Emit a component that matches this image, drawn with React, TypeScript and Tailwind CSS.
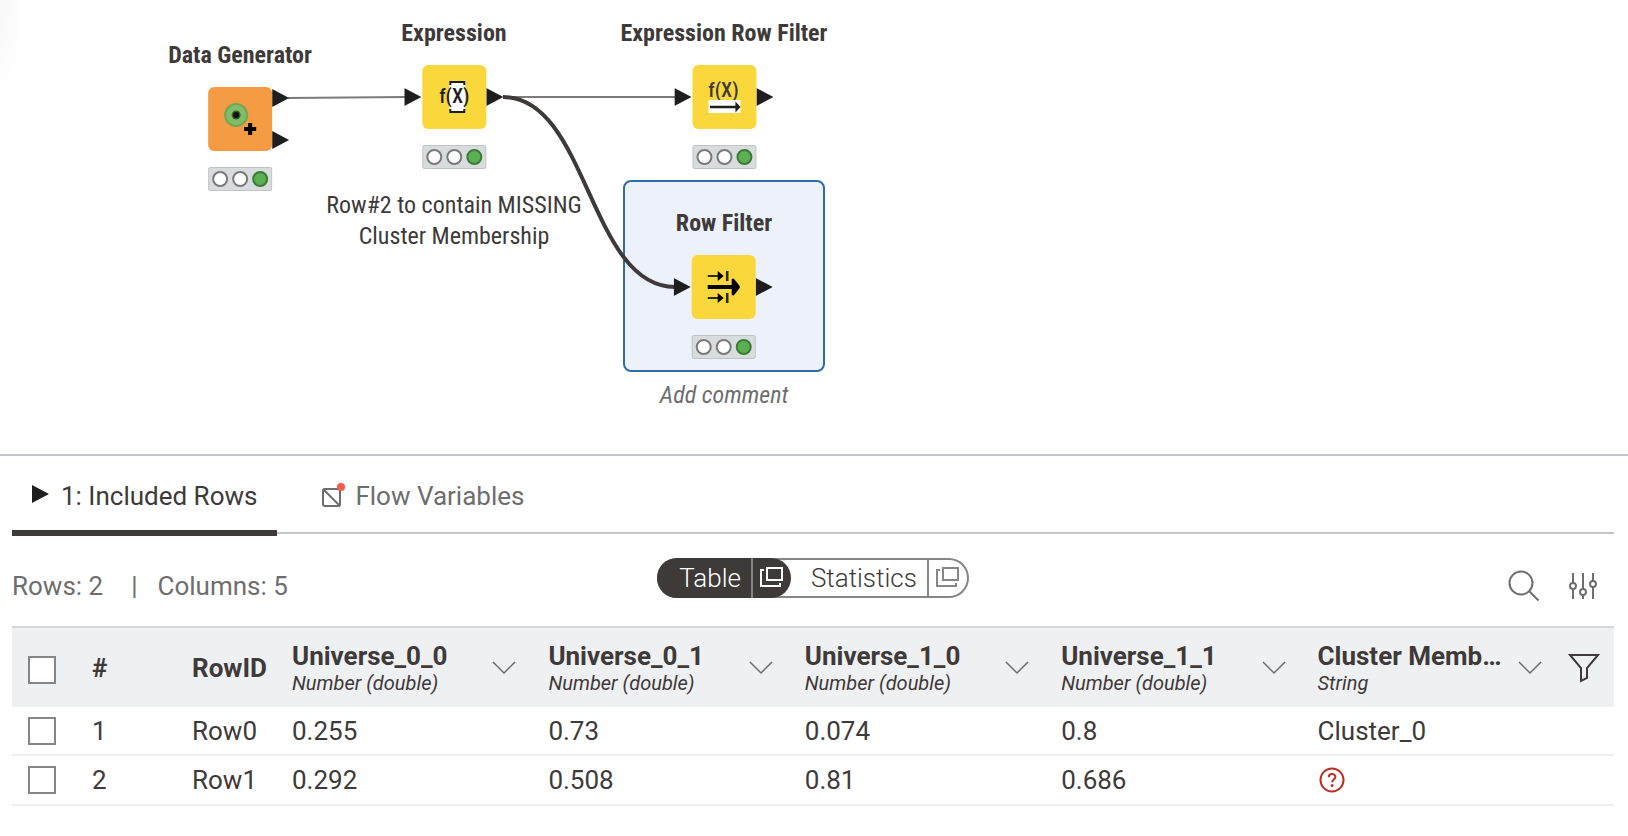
import React, { useState } from "react";

interface WorkflowNode {
  id: string;
  title: string;
  className: string;
  color: string;
  icon: React.ReactNode;
  hasInput?: boolean;
  outputs: number;
  comment?: React.ReactNode;
}

interface Column {
  name: string;
  type: string;
}

interface Row {
  id: string;
  values: (string | null)[];
}

const columns: Column[] = [
  { name: "Universe_0_0", type: "Number (double)" },
  { name: "Universe_0_1", type: "Number (double)" },
  { name: "Universe_1_0", type: "Number (double)" },
  { name: "Universe_1_1", type: "Number (double)" },
  { name: "Cluster Memb…", type: "String" },
];

const rows: Row[] = [
  { id: "Row0", values: ["0.255", "0.73", "0.074", "0.8", "Cluster_0"] },
  { id: "Row1", values: ["0.292", "0.508", "0.81", "0.686", null] },
];

const GeneratorIcon = () => (
  <svg viewBox="0 0 64 64" className="size-16" aria-hidden="true">
    <circle cx="28" cy="28" r="11" fill="#7fbd68" stroke="#74a552" strokeWidth="2" />
    <circle cx="28" cy="28" r="4.5" fill="#3d5c33" />
    <circle cx="28" cy="28" r="3" fill="#111" />
    <path d="M40 36h4v4h4v4h-4v4h-4v-4h-4v-4h4z" fill="#000" />
  </svg>
);

const ExpressionIcon = () => (
  <svg viewBox="0 0 64 64" className="size-16" aria-hidden="true">
    <rect x="27" y="16" width="16" height="32" fill="#fff" />
    <path d="M28 20v-3h14v3M28 44v3h14v-3" fill="none" stroke="#1e1e1e" strokeWidth="2" />
    <text x="32" y="38" textAnchor="middle" fontSize="20" fontWeight="500" fill="#1e1e1e">
      f(X)
    </text>
  </svg>
);

const ExpressionRowFilterIcon = () => (
  <svg viewBox="0 0 64 64" className="size-16" aria-hidden="true">
    <text x="31" y="32" textAnchor="middle" fontSize="20" fontWeight="500" fill="#3e3a39">
      f(X)
    </text>
    <rect x="16" y="35" width="32" height="13" fill="#fff" />
    <path d="M17.500 42H44" stroke="#1e1e1e" strokeWidth="2.500" />
    <path d="M43 36.500L48 42l-5 5.500z" fill="#1e1e1e" />
  </svg>
);

const RowFilterIcon = () => (
  <svg viewBox="0 0 64 64" className="size-16" aria-hidden="true">
    <path d="M16 21h11M16 43h11" stroke="#2e2a10" strokeWidth="2.200" />
    <path d="M26 16l6 5-6 5zM26 38l6 5-6 5z" fill="#000" />
    <path d="M35.500 16v10M35.500 38v10" stroke="#2e2a10" strokeWidth="2.600" />
    <path d="M16 32h26" stroke="#000" strokeWidth="4" />
    <path d="M40 24l2-.5 6 7.500v2l-6 7.500-2-.5z" fill="#000" />
  </svg>
);

const Port = () => (
  <svg viewBox="0 0 17 18" className="h-[18px] w-[17px]" aria-hidden="true">
    <path d="M0 0l17 9-17 9z" fill="#1e1e1e" />
  </svg>
);

const nodes: WorkflowNode[] = [
  {
    id: "generator",
    title: "Data Generator",
    className: "left-[240px] top-[39px]",
    color: "bg-[#f49b43]",
    icon: <GeneratorIcon />,
    outputs: 2,
  },
  {
    id: "expression",
    title: "Expression",
    className: "left-[454px] top-[17px]",
    color: "bg-[#fad73b]",
    icon: <ExpressionIcon />,
    hasInput: true,
    outputs: 1,
    comment: (
      <p className="mt-[21px] text-center text-2xl leading-[31px] whitespace-nowrap">
        Row#2 to contain MISSING
        <br />
        Cluster Membership
      </p>
    ),
  },
  {
    id: "expression-row-filter",
    title: "Expression Row Filter",
    className: "left-[724px] top-[17px]",
    color: "bg-[#fad73b]",
    icon: <ExpressionRowFilterIcon />,
    hasInput: true,
    outputs: 1,
  },
  {
    id: "row-filter",
    title: "Row Filter",
    className: "left-[724px] top-[207px]",
    color: "bg-[#fad73b]",
    icon: <RowFilterIcon />,
    hasInput: true,
    outputs: 1,
    comment: (
      <p className="mt-[21px] text-center text-2xl leading-[31px] text-[#6e6e6e] italic whitespace-nowrap">
        Add comment
      </p>
    ),
  },
];

const NodeStatus = () => (
  <div className="mt-4 flex h-6 w-16 items-center justify-center gap-1 rounded-xs border border-[#c0c4c6] bg-[#d8dcdd]">
    <span className="size-4 rounded-full border-2 border-[#7a7a7a] bg-white" />
    <span className="size-4 rounded-full border-2 border-[#7a7a7a] bg-white" />
    <span className="size-4 rounded-full border-2 border-[#3d7a38] bg-[#5cb053]" />
  </div>
);

const NodeView = ({ node }: { node: WorkflowNode }) => (
  <div className={`absolute flex -translate-x-1/2 flex-col items-center ${node.className}`}>
    <h2 className="h-12 text-2xl leading-[32px] font-bold whitespace-nowrap">{node.title}</h2>
    <div className={`relative size-16 rounded-md ${node.color}`}>
      {node.icon}
      {node.hasInput && (
        <div className="absolute top-[23px] right-full mr-px">
          <Port />
        </div>
      )}
      <div
        className={`absolute left-full flex flex-col gap-6 ${
          node.outputs > 1 ? "top-[2px]" : "top-[23px]"
        }`}
      >
        {Array.from({ length: node.outputs }, (_, i) => (
          <Port key={i} />
        ))}
      </div>
    </div>
    <NodeStatus />
    {node.comment}
  </div>
);

const WorkflowCanvas = () => (
  <section
    aria-label="Workflow"
    className="relative h-[454px] overflow-hidden font-['Roboto_Condensed',Roboto,sans-serif]"
  >
    <div className="absolute top-0 left-0 h-24 w-6 bg-radial-[farthest-side_at_0%_0%] from-[#f7f7f7] to-white" />
    {/* selection frame of the active node */}
    <div className="absolute top-[180px] left-[623px] h-[192px] w-[202px] rounded-lg border-2 border-[#306ca8] bg-[#ecf1fa]" />
    <svg className="absolute top-0 left-0 h-full w-[900px]" fill="none" aria-hidden="true">
      <path d="M288 98L405 97M503 97H675" stroke="#7b7b7b" strokeWidth="2" />
      <path d="M503 97C588 97 589 287 675 287" stroke="#3e3a39" strokeWidth="4" />
    </svg>
    {nodes.map((node) => (
      <NodeView key={node.id} node={node} />
    ))}
  </section>
);

const PopOutIcon = () => (
  <svg viewBox="0 0 24 22" className="h-[22px] w-6" fill="none" stroke="currentColor" strokeWidth="2">
    <path d="M8 1h15v12H8z" />
    <path d="M5 3H2v16h19v-3" />
  </svg>
);

const Chevron = () => (
  <svg viewBox="0 0 24 14" className="h-[14px] w-6" fill="none" stroke="#6e6e6e" strokeWidth="1.500">
    <path d="M1 1l11 11L23 1" />
  </svg>
);

const SearchIcon = () => (
  <svg viewBox="0 0 32 32" className="size-8" fill="none" stroke="#6e6e6e" strokeWidth="2">
    <circle cx="13" cy="13" r="11.500" />
    <path d="M21 21l9.500 9.500" />
  </svg>
);

const SlidersIcon = () => (
  <svg viewBox="0 0 30 28" className="h-7 w-[30px]" fill="none" stroke="#6e6e6e" strokeWidth="2">
    <path d="M5 1v10M5 17v10M15 1v16M15 23v4M25 1v8M25 15v12" />
    <circle cx="5" cy="14" r="3" />
    <circle cx="15" cy="20" r="3" />
    <circle cx="25" cy="12" r="3" />
  </svg>
);

const FilterIcon = () => (
  <svg viewBox="0 0 32 30" className="h-[30px] w-8" fill="none" stroke="#3e3a39" strokeWidth="2">
    <path d="M2 2h28L19 15v10l-6 3V15z" />
  </svg>
);

const FlowVariablesIcon = () => (
  <svg viewBox="0 0 24 26" className="h-[26px] w-6" fill="none" stroke="#6e6e6e" strokeWidth="2">
    <rect x="2" y="6" width="17" height="17" rx="2" />
    <path d="M2 6l17 17" />
    <circle cx="20" cy="4" r="4" fill="#f55b4e" stroke="none" />
  </svg>
);

const MissingIcon = () => (
  <svg viewBox="-1 -1 28 28" className="size-7" fill="none" stroke="#bd2d25" role="img" aria-label="Missing value">
    <circle cx="13" cy="13" r="11.500" strokeWidth="2" />
    <path d="M9.800 10.200c0-4.200 6.600-4.200 6.600-.2 0 2.600-3.300 2.400-3.300 5.200" strokeWidth="2" />
    <circle cx="13.100" cy="18.500" r="1.500" fill="#bd2d25" stroke="none" />
  </svg>
);

const Checkbox = ({
  label,
  checked,
  onChange,
}: {
  label: string;
  checked: boolean;
  onChange: () => void;
}) => (
  <input
    type="checkbox"
    aria-label={label}
    checked={checked}
    onChange={onChange}
    className="block size-7 appearance-none border-2 border-[#868686] bg-white checked:bg-[#3e3a39]"
  />
);

const OutputTable = () => {
  const [selected, setSelected] = useState<string[]>([]);
  const allSelected = selected.length === rows.length;

  const toggleRow = (id: string) => {
    setSelected((prev) => (prev.includes(id) ? prev.filter((r) => r !== id) : [...prev, id]));
  };

  return (
    <table className="w-full table-fixed text-left">
      <colgroup>
        <col className="w-[60px]" />
        <col className="w-[100px]" />
        <col className="w-[100px]" />
        {columns.map((column) => (
          <col key={column.name} />
        ))}
        <col className="w-[60px]" />
      </colgroup>
      <thead>
        <tr className="h-20 border-t-2 border-[#d5d8db] bg-[#eff0f2]">
          <th className="pt-1 pl-4">
            <Checkbox
              label="Select all rows"
              checked={allSelected}
              onChange={() => setSelected(allSelected ? [] : rows.map((r) => r.id))}
            />
          </th>
          <th className="pl-5 font-bold">#</th>
          <th className="pl-5 font-bold">RowID</th>
          {columns.map((column) => (
            <th key={column.name} className="pr-3 pl-5">
              <div className="flex items-center gap-4">
                <div className="min-w-0 flex-1">
                  <div className="truncate leading-[30px] font-bold">{column.name}</div>
                  <div className="text-[20px] leading-6 font-normal italic">{column.type}</div>
                </div>
                <button type="button" aria-label={`${column.name} options`}>
                  <Chevron />
                </button>
              </div>
            </th>
          ))}
          <th className="pl-[14px]">
            <button type="button" aria-label="Filter columns" className="block">
              <FilterIcon />
            </button>
          </th>
        </tr>
      </thead>
      <tbody>
        {rows.map((row, i) => (
          <tr key={row.id} className="h-12 border-b-2 border-[#efefef] last:h-[50px]">
            <td className="pl-4">
              <Checkbox
                label={`Select ${row.id}`}
                checked={selected.includes(row.id)}
                onChange={() => toggleRow(row.id)}
              />
            </td>
            <td className="pl-5">{i + 1}</td>
            <td className="pl-5">{row.id}</td>
            {row.values.map((value, j) => (
              <td key={columns[j].name} className="pl-5">
                {value ?? <MissingIcon />}
              </td>
            ))}
            <td />
          </tr>
        ))}
      </tbody>
    </table>
  );
};

const App: React.FC = () => {
  return (
    <main className="min-h-screen bg-white font-[Roboto,sans-serif] text-[#3e3a39]">
      <WorkflowCanvas />

      <section
        aria-label="Node output"
        className="border-t-2 border-[#c1c6ca] pr-[14px] pl-3 text-[26px] leading-[30px]"
      >
        <div role="tablist" className="flex h-[78px] border-b-2 border-[#c1c6ca]">
          <button
            type="button"
            role="tab"
            aria-selected="true"
            className="flex h-20 items-center gap-3 border-b-6 border-[#3e3a39] px-5 pt-[6px] whitespace-nowrap"
          >
            <span className="pb-1">
              <Port />
            </span>
            1: Included Rows
          </button>
          <button
            type="button"
            role="tab"
            aria-selected="false"
            className="flex h-20 items-center gap-[10px] pl-11 whitespace-nowrap text-[#6e6e6e]"
          >
            <FlowVariablesIcon />
            Flow Variables
          </button>
        </div>

        <div className="grid grid-cols-[1fr_auto_1fr] items-start pt-6 pb-3">
          <div className="flex h-14 items-center text-[#6e6e6e]">
            <span>Rows: 2</span>
            <span className="pr-5 pl-7">|</span>
            <span>Columns: 5</span>
          </div>
          <div className="flex h-10 rounded-full bg-white font-light inset-ring-2 inset-ring-[#868686]">
            <div className="flex rounded-full bg-[#3e3a39] text-white">
              <button type="button" className="border-r-2 border-[#868686] pr-[10px] pl-[22px]">
                Table
              </button>
              <button type="button" aria-label="Open table in new window" className="pr-2 pl-[6px]">
                <PopOutIcon />
              </button>
            </div>
            <button type="button" className="border-r-2 border-[#868686] pr-[10px] pl-5">
              Statistics
            </button>
            <button
              type="button"
              aria-label="Open statistics in new window"
              className="pr-[10px] pl-[6px] text-[#868686]"
            >
              <PopOutIcon />
            </button>
          </div>
          <div className="flex h-14 items-center justify-end gap-7 pr-4">
            <button type="button" aria-label="Search">
              <SearchIcon />
            </button>
            <button type="button" aria-label="Table settings">
              <SlidersIcon />
            </button>
          </div>
        </div>

        <OutputTable />
      </section>
    </main>
  );
};

export default App;
